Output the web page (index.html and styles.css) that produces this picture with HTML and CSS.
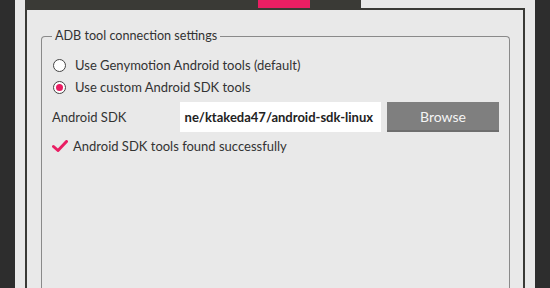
FILE: index.html
```html
<!doctype html>
<html lang="en">
<head>
  <meta charset="UTF-8">
  <title>ADB settings</title>
  <link rel="stylesheet" href="styles.css">
</head>
<body>
  <div class="shell">
    <div class="tabbar">
      <span class="tab-active"></span>
    </div>
    <div class="panel">
      <fieldset class="group">
        <legend>ADB tool connection settings</legend>
        <label class="radio-row">
          <span class="radio"></span>
          <span>Use Genymotion Android tools (default)</span>
        </label>
        <label class="radio-row">
          <span class="radio checked"></span>
          <span>Use custom Android SDK tools</span>
        </label>
        <div class="sdk-row">
          <span class="sdk-label">Android SDK</span>
          <div class="sdk-path"><span>ne/ktakeda47/android-sdk-linux</span></div>
          <button class="browse">Browse</button>
        </div>
        <div class="status">
          <svg width="16" height="12" viewBox="0 0 16 12">
            <path d="M1.5 6.5 L6 10.5 L14.5 1.5" fill="none" stroke="#e91e63" stroke-width="3" stroke-linecap="round" stroke-linejoin="round"/>
          </svg>
          <span>Android SDK tools found successfully</span>
        </div>
      </fieldset>
    </div>
  </div>
</body>
</html>
```

FILE: styles.css
```css
html, body {
  margin: 0;
  height: 100%;
}
body {
  background: #2d2d2d;
  font-family: Lato, "Open Sans", sans-serif;
  font-size: 13px;
  color: #333;
  overflow: hidden;
}
.shell {
  display: flex;
  flex-direction: column;
  width: 500px;
  height: 100%;
  margin-left: 15px;
  padding: 0 10px;
  background: #e8e8e8;
}
.tabbar {
  flex: none;
  width: 336px;
  height: 8px;
  background: #3a3a36;
}
.tab-active {
  display: block;
  width: 52px;
  height: 8px;
  margin-left: 233px;
  background: #e91e63;
}
.panel {
  flex: 1;
  display: flex;
  flex-direction: column;
  border: 2px solid #3a3a36;
  border-bottom: none;
  background: #e9e9e9;
  padding: 18px 14px 0;
}
.group {
  flex: 1;
  margin: 0;
  border: 1px solid #8a8a8a;
  border-bottom: none;
  border-radius: 4px 4px 0 0;
  padding: 10px 10px 0 10px;
}
.group legend {
  padding: 0 3px;
  line-height: 16px;
  font-size: 12.6px;
  color: #333;
}
.radio-row {
  display: flex;
  align-items: center;
  height: 22px;
  gap: 9px;
  margin-left: 1px;
}
.radio {
  box-sizing: border-box;
  width: 13px;
  height: 13px;
  border: 1px solid #444;
  border-radius: 50%;
  background: #fff;
  display: flex;
  align-items: center;
  justify-content: center;
}
.radio.checked::after {
  content: "";
  width: 7px;
  height: 7px;
  border-radius: 50%;
  background: #e91e63;
}
.sdk-row {
  display: flex;
  align-items: center;
  margin-top: 4px;
  height: 30px;
}
.sdk-label {
  width: 128px;
}
.sdk-path {
  display: flex;
  justify-content: flex-end;
  width: 201px;
  height: 30px;
  line-height: 30px;
  padding-right: 8px;
  box-sizing: border-box;
  background: #fff;
  overflow: hidden;
  white-space: nowrap;
  font-weight: bold;
  color: #222;
}
.browse {
  margin-left: 6px;
  width: 112px;
  height: 30px;
  border: none;
  border-bottom: 2px solid #6e6e6e;
  background: #7f7f7f;
  color: #f4f4f4;
  font-family: Lato, sans-serif;
  font-size: 14px;
  padding: 0;
}
.status {
  display: flex;
  align-items: center;
  gap: 5px;
  height: 28px;
}
```
